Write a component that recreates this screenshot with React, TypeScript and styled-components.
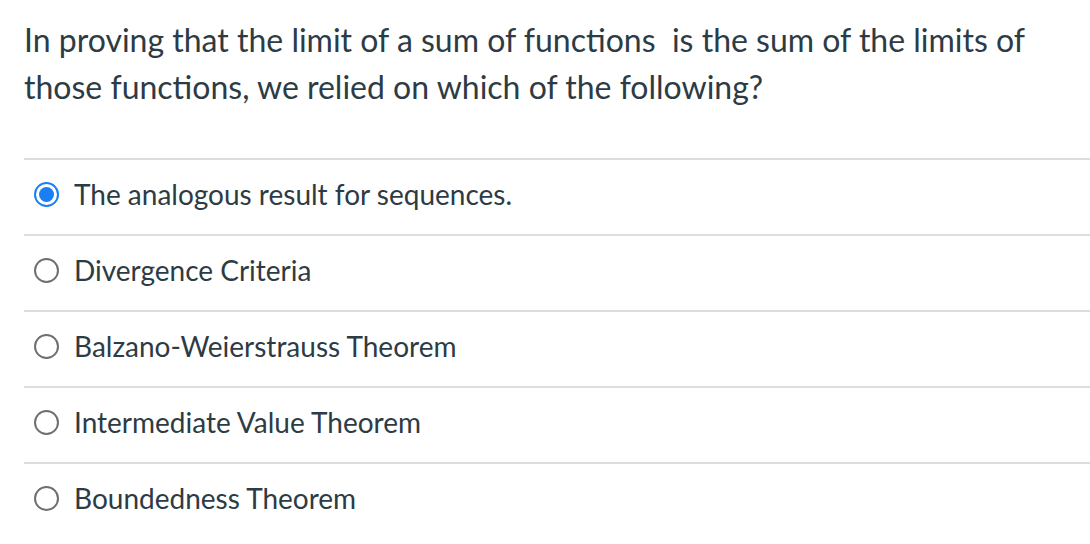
import styled, { createGlobalStyle } from "styled-components";

const GlobalStyle = createGlobalStyle`
  html, body {
    margin: 0;
    padding: 0;
    background: #ffffff;
  }
  body {
    font-family: Lato, "Open Sans", "Liberation Sans", sans-serif;
    color: #2d3b45;
  }
`;

const options = [
  "The analogous result for sequences.",
  "Divergence Criteria",
  "Balzano-Weierstrauss Theorem",
  "Intermediate Value Theorem",
  "Boundedness Theorem",
];

const Page = styled.div`
  padding: 16px 0 0 24px;
`;

const Question = styled.p`
  margin: 0 0 48px 0;
  max-width: 1040px;
  font-size: 32px;
  line-height: 47px;
`;

const AnswerList = styled.div`
  display: flex;
  flex-direction: column;
`;

const Answer = styled.label`
  box-sizing: border-box;
  display: flex;
  align-items: center;
  gap: 15px;
  height: 76px;
  border-top: 2px solid #dddddd;
  padding: 0 0 6px 10px;
  font-size: 28px;
`;

const Radio = styled.span<{ checked: boolean }>`
  box-sizing: border-box;
  width: 25px;
  height: 25px;
  border-radius: 50%;
  border: 2px solid ${(p) => (p.checked ? "#1a7ef5" : "#6f6f6f")};
  display: flex;
  align-items: center;
  justify-content: center;
  flex-shrink: 0;

  &::after {
    content: "";
    width: 15px;
    height: 15px;
    border-radius: 50%;
    background: ${(p) => (p.checked ? "#1a7ef5" : "transparent")};
  }
`;

export default function App() {
  return (
    <>
      <GlobalStyle />
      <Page>
        <Question>
          In proving that the limit of a sum of functions&nbsp; is the sum of the limits of
          those functions, we relied on which of the following?
        </Question>
        <AnswerList>
          {options.map((text, i) => (
            <Answer key={text}>
              <Radio checked={i === 0} />
              {text}
            </Answer>
          ))}
        </AnswerList>
      </Page>
    </>
  );
}
